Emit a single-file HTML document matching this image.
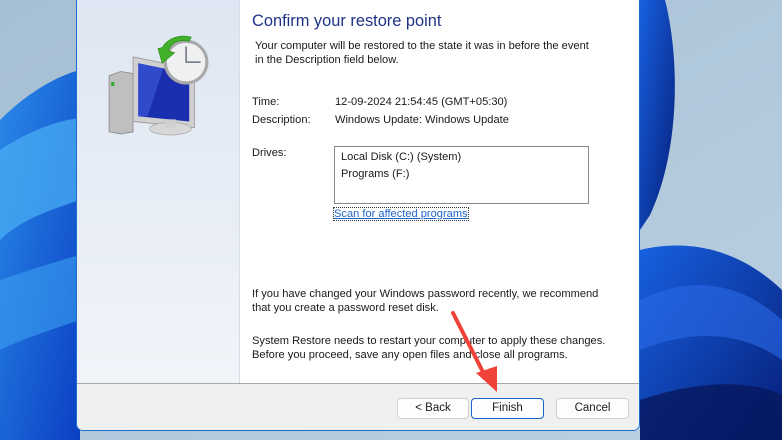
<!DOCTYPE html>
<html><head><style>
*{margin:0;padding:0;box-sizing:border-box}
body{width:782px;height:440px;overflow:hidden;position:relative;font-family:"Liberation Sans",sans-serif;font-size:11.1px;color:#1a1a1a;background:#a9c4d9}
.t{position:absolute;white-space:nowrap}
.btn{position:absolute;top:398px;height:21px;border:1px solid #d0d0d0;border-radius:4px;background:#fdfdfd;text-align:center;line-height:19px;font-size:11.5px}
</style></head><body>
<svg width="782" height="440" style="position:absolute;left:0;top:0">
<defs>
<linearGradient id="bg" x1="0" y1="0" x2="1" y2="1"><stop offset="0" stop-color="#a7bfd3"/><stop offset="1" stop-color="#b9d0e2"/></linearGradient>
<linearGradient id="bl" x1="0" y1="0" x2="1" y2="1"><stop offset="0" stop-color="#2a8ae8"/><stop offset="1" stop-color="#0b3fc4"/></linearGradient>
<linearGradient id="bl2" x1="0" y1="0" x2="1" y2="1"><stop offset="0" stop-color="#1760e0"/><stop offset="1" stop-color="#061e78"/></linearGradient>
</defs>
<rect width="782" height="440" fill="url(#bg)"/>
<path d="M0 120 C30 90 60 75 80 70 L80 440 L0 440Z" fill="url(#bl)"/>
<path d="M0 150 C30 130 60 120 80 118 L80 200 C50 210 20 220 0 240Z" fill="#4ab0f5" opacity=".7"/>
<path d="M0 280 C30 270 60 260 80 255 L80 320 C50 330 20 340 0 350Z" fill="#3aa0f0" opacity=".6"/>
<path d="M640 0 L665 0 C680 60 680 150 650 215 L640 230Z" fill="url(#bl2)"/>
<path d="M640 250 C690 238 740 250 782 290 L782 440 L640 440Z" fill="url(#bl2)"/>
<path d="M640 300 C700 270 750 290 782 320 L782 360 C740 330 690 330 640 350Z" fill="#2a6ae8" opacity=".6"/>
<path d="M640 400 C700 380 750 380 782 395 L782 440 L640 440Z" fill="#06185e" opacity=".8"/>
</svg>
<div style="position:absolute;left:76px;top:0;width:564px;height:431px;border:1px solid #1a6fd0;border-top:none;border-radius:0 0 7px 7px;background:#fff;overflow:hidden">
<div style="position:absolute;left:0;top:0;width:163px;height:383px;background:linear-gradient(#dde6f2,#f1f4f9);border-right:1px solid #d6dde6"></div>
<div style="position:absolute;left:0;top:383px;width:564px;height:48px;background:#f0f0f0;border-top:1px solid #a8a8a8"></div>
</div>
<svg width="104" height="104" style="position:absolute;left:106px;top:32px" viewBox="0 0 100 100">
<path d="M3 42 L14 38 L26 40 L26 96 L14 98 L3 96Z" fill="#bfbfbf" stroke="#8a8a8a" stroke-width=".8"/>
<rect x="5" y="48" width="3" height="4" fill="#3a3"/>
<path d="M26 24 L85 36 L85 92 L26 86Z" fill="#d0d0d0" stroke="#999" stroke-width=".8"/>
<path d="M31 30 L80 40 L80 86 L31 81Z" fill="#1a2fb0"/>
<path d="M31 30 L55 35 L40 81 L31 81Z" fill="#3a55d8" opacity=".7"/>
<ellipse cx="62" cy="93" rx="20" ry="6" fill="#d8d8d8" stroke="#aaa" stroke-width=".8"/>
<rect x="57" y="84" width="10" height="8" fill="#cfcfcf"/>
<circle cx="77" cy="29" r="20" fill="#eef0f2" stroke="#a9a9a9" stroke-width="3"/>
<path d="M77 14 L77 29 L91 29" stroke="#556" stroke-width="1.2" fill="none"/>
<path d="M54 15 C60 5 72 2 82 5 L80 9 C70 7 63 10 60 18 L66 20 L54 30 L50 16Z" fill="#43b02a" stroke="#2b8a1a" stroke-width=".6"/>
</svg>
<div class="t" style="left:252px;top:12px;font-size:16.4px;color:#1e3287">Confirm your restore point</div>
<div class="t" style="left:255px;top:39px;line-height:14px">Your computer will be restored to the state it was in before the event<br>in the Description field below.</div>
<div class="t" style="left:252px;top:96px">Time:</div>
<div class="t" style="left:335px;top:96px">12-09-2024 21:54:45 (GMT+05:30)</div>
<div class="t" style="left:252px;top:114px">Description:</div>
<div class="t" style="left:335px;top:114px">Windows Update: Windows Update</div>
<div class="t" style="left:252px;top:147px">Drives:</div>
<div style="position:absolute;left:334px;top:146px;width:255px;height:58px;border:1px solid #8a8a8a;background:#fff"></div>
<div class="t" style="left:341px;top:151px">Local Disk (C:) (System)</div>
<div class="t" style="left:341px;top:168px">Programs (F:)</div>
<div class="t" style="left:334px;top:208px;color:#1d64c8;text-decoration:underline;outline:1px dotted #333">Scan for affected programs</div>
<div class="t" style="left:252px;top:288px;line-height:13.5px">If you have changed your Windows password recently, we recommend<br>that you create a password reset disk.</div>
<div class="t" style="left:252px;top:335px;line-height:13.5px">System Restore needs to restart your computer to apply these changes.<br>Before you proceed, save any open files and close all programs.</div>
<div class="btn" style="left:397px;width:72px">&lt; Back</div>
<div class="btn" style="left:471px;width:73px;border:1px solid #1664c8">Finish</div>
<div class="btn" style="left:556px;width:73px">Cancel</div>
<svg width="782" height="440" style="position:absolute;left:0;top:0;pointer-events:none">
<line x1="453" y1="313" x2="486" y2="378" stroke="#f04238" stroke-width="4" stroke-linecap="round"/>
<path d="M476 373 L497 366 L497 392Z" fill="#f04238"/>
</svg>
</body></html>
